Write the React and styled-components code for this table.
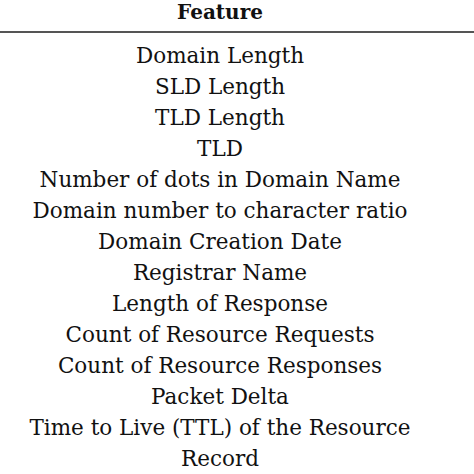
import React from "react";
import styled, { createGlobalStyle } from "styled-components";

const features = [
  "Domain Length",
  "SLD Length",
  "TLD Length",
  "TLD",
  "Number of dots in Domain Name",
  "Domain number to character ratio",
  "Domain Creation Date",
  "Registrar Name",
  "Length of Response",
  "Count of Resource Requests",
  "Count of Resource Responses",
  "Packet Delta",
  "Time to Live (TTL) of the Resource Record",
];

const Global = createGlobalStyle`
  html, body {
    margin: 0;
    padding: 0;
    background: #ffffff;
  }
`;

const Table = styled.div`
  width: 474px;
  height: 474px;
  overflow: hidden;
  font-family: "DejaVu Serif", "Liberation Serif", serif;
  color: #111;
  display: flex;
  flex-direction: column;
`;

// the column is a little left of the picture's middle
const HeadCell = styled.div`
  font-weight: bold;
  font-size: 20px;
  line-height: 24px;
  text-align: center;
  height: 32px;
  padding-right: 34px;
  border-bottom: 2px solid #555;
`;

const Body = styled.div`
  display: flex;
  flex-direction: column;
  align-items: center;
  padding-top: 7px;
  padding-right: 34px;
`;

const Cell = styled.div`
  width: 400px;
  font-size: 21.5px;
  line-height: 31px;
  text-align: center;
`;

export default function App() {
  return (
    <>
      <Global />
      <Table>
        <HeadCell>Feature</HeadCell>
        <Body>
          {features.map((f) => (
            <Cell key={f}>{f}</Cell>
          ))}
        </Body>
      </Table>
    </>
  );
}
